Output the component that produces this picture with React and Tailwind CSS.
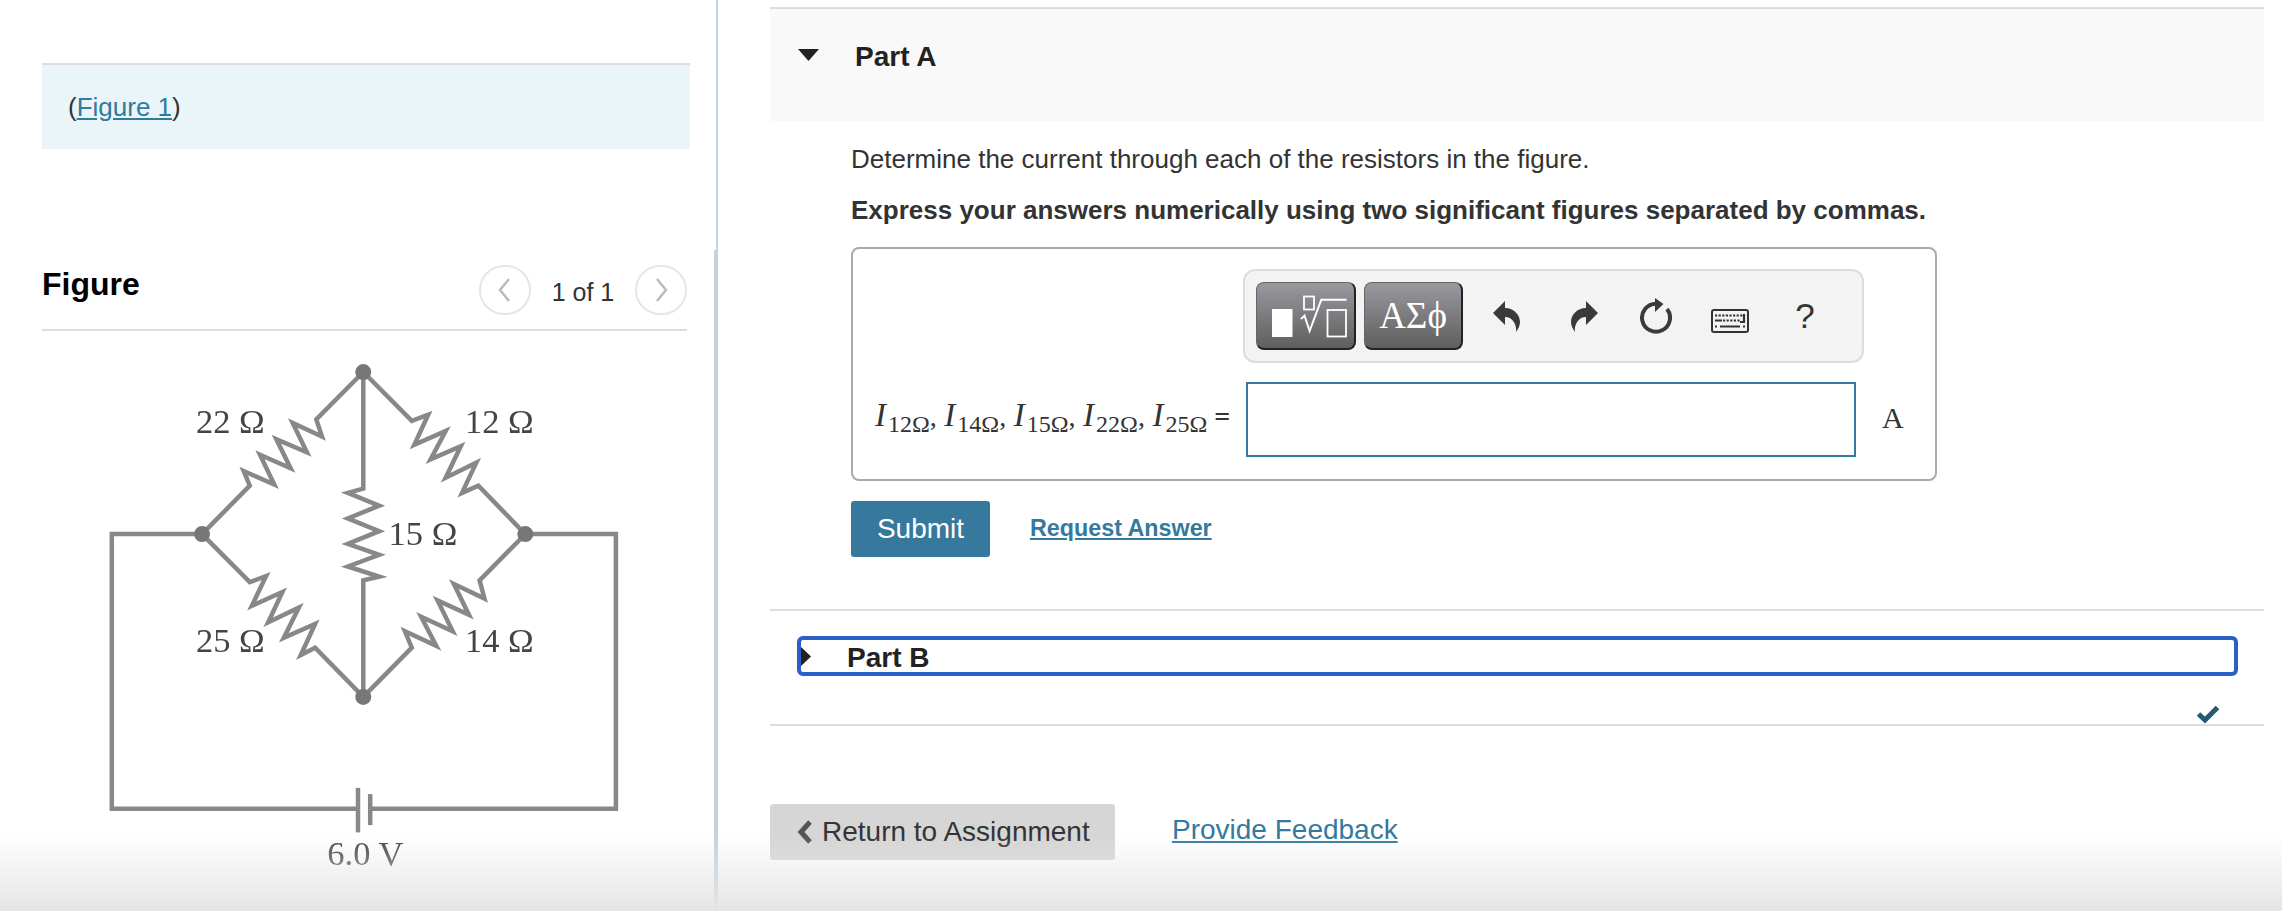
import React from 'react';

// the zoomed crop of the circuit was 1568x1568 for 640x571 real pixels
const pts = (list) => list.map(([x, y]) => `${(x / 2.45).toFixed(1)},${(y / 2.746).toFixed(1)}`).join(' ');

const WIRES = [
    [[743, 88], [628, 218], [642, 265], [570, 228], [605, 308], [530, 272], [565, 352], [490, 315], [525, 397], [450, 360], [465, 400], [348, 533]],
    [[743, 88], [862, 222], [902, 205], [868, 288], [945, 250], [908, 328], [982, 292], [945, 378], [1020, 337], [985, 420], [1025, 400], [1140, 533]],
    [[743, 88], [743, 408], [705, 420], [782, 455], [705, 490], [782, 525], [705, 560], [782, 590], [705, 622], [782, 650], [743, 660], [743, 980]],
    [[348, 533], [465, 665], [505, 648], [470, 730], [545, 692], [510, 775], [585, 735], [548, 818], [625, 780], [590, 865], [625, 845], [743, 980]],
    [[743, 980], [862, 845], [845, 800], [922, 840], [885, 760], [962, 800], [925, 715], [1002, 755], [965, 670], [1040, 710], [1028, 660], [1140, 533]],
    [[348, 533], [127, 533], [127, 1287], [730, 1287]],
    [[1140, 533], [1362, 533], [1362, 1287], [760, 1287]],
    [[730, 1230], [730, 1352]],
    [[760, 1247], [760, 1332]],
];

const NODES = [[743, 88], [348, 533], [1140, 533], [743, 980]];

const LABELS = [
    ['22 Ω', 333, 255],
    ['12 Ω', 992, 255],
    ['15 Ω', 805, 563],
    ['25 Ω', 333, 858],
    ['14 Ω', 992, 858],
    ['6.0 V', 655, 1442],
];

function Circuit() {
    return (
        <svg width="640" height="571" viewBox="0 0 640 571" className="mt-[9px] ml-[18px] shrink-0 blur-[0.6px]">
            {WIRES.map((w, i) => (
                <polyline key={i} points={pts(w)} fill="none" stroke="#888" strokeWidth="4.5" strokeLinejoin="miter" />
            ))}
            {NODES.map(([x, y], i) => (
                <circle key={i} cx={x / 2.45} cy={y / 2.746} r="8" fill="#777" />
            ))}
            {LABELS.map(([text, x, y]) => (
                <text key={text} x={x / 2.45} y={y / 2.746} fontSize="34.5" fontFamily="Liberation Serif" fill="#444">{text}</text>
            ))}
        </svg>
    );
}

function NavButton({ d }) {
    return (
        <div className="w-[52px] h-[50px] rounded-full border-2 border-[#e6e6e6] flex items-center justify-center">
            <svg width="16" height="26" viewBox="0 0 16 26">
                <path d={d} fill="none" stroke="#bbb" strokeWidth="2.5" />
            </svg>
        </div>
    );
}

function Sub({ value, comma = true }) {
    return (
        <>
            <span className="italic text-[33px]">I</span>
            <span className="text-[24px] align-[-6px] ml-[2px]">{value}</span>
            {comma && <span className="text-[28px] mr-[7.5px]">,</span>}
        </>
    );
}

function SqrtIcon() {
    return (
        <svg width="98" height="66" viewBox="0 0 98 66" className="absolute inset-0">
            <rect x="15" y="26" width="20.5" height="28" fill="#fff" />
            <rect x="47" y="13.5" width="10" height="13" fill="none" stroke="#fff" strokeWidth="1.8" />
            <path d="M44 36 L47.5 32.5 L52.6 48 L64.3 16.7 H89.5" fill="none" stroke="#fff" strokeWidth="2" />
            <rect x="70.5" y="27" width="18.5" height="26.5" fill="none" stroke="#fff" strokeWidth="1.8" />
        </svg>
    );
}

function UndoIcon({ flip }) {
    return (
        <svg width="27" height="31" viewBox="0 0 27 31" className={flip ? '-scale-x-100' : ''}>
            <path d="M0 12 L12 0 V7 C21 7 27 14 27 21 C27 25 25 28 23 31 C24 24 20 16 12 16 V24 Z" fill="#3a3a3a" />
        </svg>
    );
}

function ResetIcon() {
    return (
        <svg width="32" height="36" viewBox="0 0 32 36">
            <path d="M16 5.7 A14 14 0 1 0 27 11" fill="none" stroke="#3a3a3a" strokeWidth="4" />
            <path d="M15 0 L23.5 6 L15 14 Z" fill="#3a3a3a" />
        </svg>
    );
}

function KeyboardIcon() {
    return (
        <svg width="38" height="24" viewBox="0 0 38 24" className="mt-[10px]">
            <rect x="1" y="1" width="36" height="22" rx="2" fill="#f3f3f3" stroke="#333" strokeWidth="2" />
            <path d="M4 6.5 H32 M12 11.5 H29" stroke="#333" strokeWidth="2.2" strokeDasharray="2.2 1.4" />
            <path d="M4 11.5 H11 M33 5 V13 H29 M9 17.5 H29 M4 17.5 H6 M32 17.5 H34" stroke="#333" strokeWidth="2.2" fill="none" />
        </svg>
    );
}

export default function App() {
    return (
        <div className="relative flex w-[2282px] h-[911px] overflow-hidden bg-white text-[#333] font-['Liberation_Sans',Arial,sans-serif]">
            {/* Left column, figure */}
            <div className="relative w-[718px] shrink-0 border-r-2 border-[#c3d2e3] pl-[42px] pt-[63px]">
                <div className="w-[648px] h-[86px] border-t-2 border-[#ddd] bg-[#e9f5f8] pl-[26px] flex items-center text-[26px]">
                    <span>(<a className="text-[#337a9e] underline">Figure 1</a>)</span>
                </div>
                <div className="w-[645px] mt-[115px] h-[67px] border-b-2 border-[#ddd] flex items-start justify-between">
                    <span className="text-[32px] font-bold text-black leading-[40px]">Figure</span>
                    <div className="flex items-center mt-[1px]">
                        <NavButton d="M12 2 L3 13 L12 24" />
                        <span className="w-[104px] text-center text-[25px] mt-[6px]">1 of 1</span>
                        <NavButton d="M4 2 L13 13 L4 24" />
                    </div>
                </div>
                <Circuit />
                {/* thicker part of the pane divider */}
                <div className="absolute right-[-2px] top-[250px] bottom-0 w-[4px] bg-[#c3d2e3]" />
            </div>

            {/* Right column, question */}
            <div className="flex-1 pl-[52px] pr-[18px] pt-[7px]">
                <div className="h-[114px] border-t-2 border-[#ddd] bg-[#f9f9f9] flex items-start pt-[31px] pl-[28px]">
                    <svg width="21" height="12" viewBox="0 0 21 12" className="mt-[9px]">
                        <polygon points="0,0 21,0 10.5,12" fill="#222" />
                    </svg>
                    <span className="ml-[36px] mt-[1px] text-[28px] font-bold text-[#222] leading-[32px]">Part A</span>
                </div>

                <div className="pl-[82px]">
                    <p className="mt-[22px] ml-[-1px] text-[26px] leading-[32px]">Determine the current through each of the resistors in the figure.</p>
                    <p className="mt-[19px] ml-[-1px] text-[26px] leading-[32px] font-bold">Express your answers numerically using two significant figures separated by commas.</p>

                    <div className="mt-[21px] ml-[-1px] w-[1086px] h-[234px] border-2 border-[#aaa] rounded-[8px] pt-[20px]">
                        <div className="ml-[390px] w-[621px] h-[94px] border-2 border-[#ddd] rounded-[12px] bg-[#f3f3f3] flex items-center pl-[11px]">
                            <div className="relative w-[100px] h-[68px] rounded-[8px] border border-[#666] border-r-2 border-b-2 border-r-[#222] border-b-[#222] bg-linear-to-b from-[#9a99a0] to-[#5f5f5f]">
                                <SqrtIcon />
                            </div>
                            <div className="ml-[8px] w-[99px] h-[68px] rounded-[8px] border border-[#666] border-r-2 border-b-2 border-r-[#222] border-b-[#222] bg-linear-to-b from-[#9a99a0] to-[#5f5f5f] flex items-center justify-center text-white text-[37px] font-['Liberation_Serif',serif]">ΑΣϕ</div>
                            <div className="ml-[4px] w-[78px] flex justify-center"><UndoIcon /></div>
                            <div className="w-[78px] flex justify-center"><UndoIcon flip /></div>
                            <div className="w-[66px] flex justify-center"><ResetIcon /></div>
                            <div className="w-[82px] flex justify-center"><KeyboardIcon /></div>
                            <div className="w-[68px] text-center text-[35px] text-[#333]">?</div>
                        </div>
                        <div className="mt-[19px] flex items-center pl-[22px] font-['Liberation_Serif',serif]">
                            <div className="w-[371px] mt-[-7px] whitespace-nowrap">
                                <Sub value="12Ω" />
                                <Sub value="14Ω" />
                                <Sub value="15Ω" />
                                <Sub value="22Ω" />
                                <Sub value="25Ω" comma={false} />
                                <span className="text-[28px] ml-[7px] font-bold">=</span>
                            </div>
                            <div className="w-[610px] h-[75px] border-2 border-[#337a9e] bg-white" />
                            <span className="ml-[26px] mt-[-5px] text-[30px]">A</span>
                        </div>
                    </div>

                    <div className="mt-[20px] ml-[-1px] flex items-center">
                        <button className="w-[139px] h-[56px] rounded-[3px] bg-[#37799c] text-white text-[28px]">Submit</button>
                        <a className="ml-[40px] mt-[-2px] text-[23.3px] font-bold text-[#337a9e] underline">Request Answer</a>
                    </div>
                </div>

                <div className="mt-[52px] h-[117px] border-y-2 border-[#ddd] relative">
                    <div className="absolute left-[27px] top-[25px] right-[26px] h-[40px] border-4 border-[#2a5fc7] rounded-[6px] flex items-center">
                        <svg width="10" height="19" viewBox="0 0 10 19" className="shrink-0">
                            <polygon points="0,0 10,9.5 0,19" fill="#222" />
                        </svg>
                        <span className="ml-[36px] mt-[4px] text-[28px] font-bold text-[#222] leading-[32px]">Part B</span>
                    </div>
                    <svg width="24" height="19" viewBox="0 0 24 19" className="absolute right-[44px] bottom-[0px]">
                        <path d="M2.5 9 L9 15 L21.5 2.5" fill="none" stroke="#265a72" strokeWidth="5" />
                    </svg>
                </div>

                <div className="mt-[78px] flex items-center">
                    <button className="w-[345px] h-[56px] rounded-[3px] bg-[#d6d6d6] flex items-center pl-[27px] text-[28px] text-[#333]">
                        <svg width="16" height="24" viewBox="0 0 16 24" className="mr-[9px]">
                            <path d="M13 2 L4 12 L13 22" fill="none" stroke="#555" strokeWidth="5" />
                        </svg>
                        Return to Assignment
                    </button>
                    <a className="ml-[57px] mb-[5px] text-[28px] text-[#337a9e] underline">Provide Feedback</a>
                </div>
            </div>

            {/* browser fade along the bottom edge */}
            <div className="absolute inset-x-0 bottom-0 h-[75px] pointer-events-none bg-linear-to-b from-white/0 to-[#e5e5e5]" />
        </div>
    );
}
